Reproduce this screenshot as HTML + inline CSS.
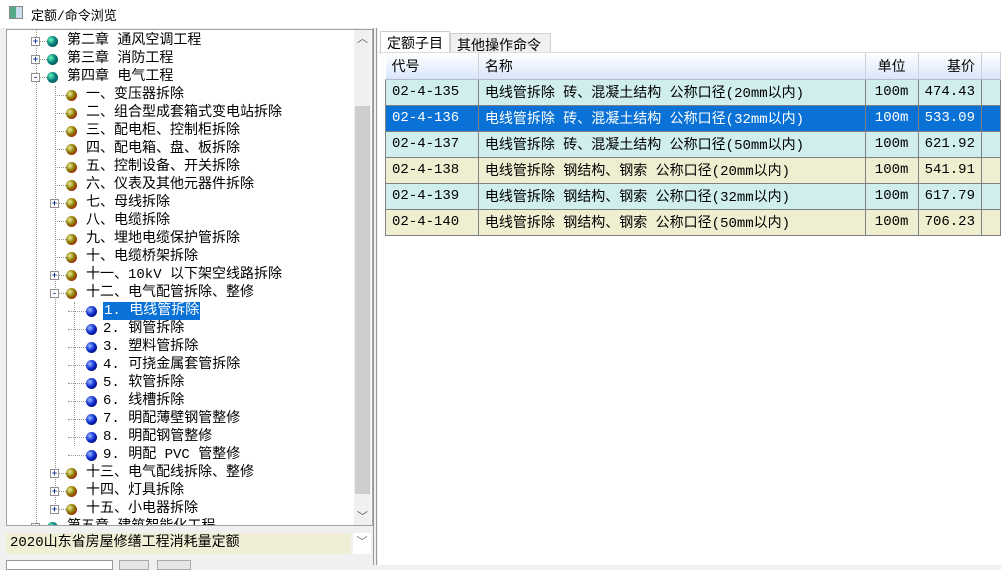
<!DOCTYPE html>
<html><head><meta charset="utf-8"><style>
*{margin:0;padding:0;box-sizing:border-box}
body{width:1001px;height:565px;background:#f0f0f0;font-family:"Liberation Mono","Noto Sans CJK SC","WenQuanYi Zen Hei",monospace;font-size:14px;position:relative;overflow:hidden;color:#000}
.abs{position:absolute}
#title{left:0;top:0;width:1001px;height:28px;background:#fff}
#tree{left:6px;top:29px;width:367px;height:497px;background:#fff;border:1px solid #a0a0a0;overflow:hidden}
.r{position:absolute;height:18px;line-height:18px;white-space:nowrap;font-size:14px}
.pm{position:absolute;width:9px;height:9px;border:1px solid #919191;background:#fff;font-size:9px;line-height:7px;text-align:center;color:#1a3f9a;font-weight:bold;font-family:"Liberation Sans",sans-serif}
.ball{position:absolute;width:11px;height:11px;border-radius:50%}
.b1{background:radial-gradient(circle at 35% 35%,#6fb,#0a8080 45%,#044 90%)}
.b2{background:radial-gradient(circle at 35% 35%,#ee9,#8a7a00 45%,#a01 90%)}
.b3{background:radial-gradient(circle at 35% 35%,#9bf,#1030d0 45%,#000060 90%)}
.dh{position:absolute;height:0;border-top:1px dotted #999}
.dv{position:absolute;width:0;border-left:1px dotted #999}
table{border-collapse:collapse;position:absolute;left:385px;top:53px;font-size:14px;table-layout:fixed}
td{height:26px;border:1px solid #808080;padding:0 6px;white-space:nowrap;overflow:hidden}
th{height:26px;font-weight:normal;text-align:left;padding:0 6px;background:linear-gradient(#fff,#d8e6fb);border-right:1px solid #c8d0dc;border-bottom:1px solid #b0bccc}
.c{background:#cfeeed}.y{background:#f0eed0}.s{background:#0a72d6;color:#fff}
</style></head><body>
<div id="title" class="abs">
 <div class="abs" style="left:9px;top:6px;width:14px;height:13px;border:1px solid #888;background:linear-gradient(90deg,#5a8 0 50%,#cde 50%)"></div>
 <div class="abs" style="left:31px;top:5px;font-size:13px">定额/命令浏览</div>
</div>
<div id="tree" class="abs">
 <div class="dv" style="left:29px;top:0;height:497px"></div>
 <div class="dv" style="left:48px;top:56px;height:420px"></div>
 <div class="dv" style="left:67px;top:272px;height:144px"></div>
</div>
<div id="items"></div>
<div class="abs" style="left:354px;top:30px;width:17px;height:495px;background:#f0f0f0"></div>
<div class="abs" style="left:355px;top:106px;width:15px;height:388px;background:#cdcdcd"></div>
<div class="abs" style="left:357px;top:30px;font-size:11px;color:#606060">︿</div>
<div class="abs" style="left:357px;top:508px;font-size:11px;color:#606060">﹀</div>
<div class="abs" style="left:6px;top:533px;width:345px;height:21px;background:#f0efd5;font-size:14px;line-height:21px;padding-left:4px">2020山东省房屋修缮工程消耗量定额</div>
<div class="abs" style="left:353px;top:533px;width:18px;height:21px;background:#fff;color:#707070;font-size:11px;text-align:center;line-height:21px">﹀</div>
<div class="abs" style="left:6px;top:560px;width:107px;height:10px;background:#fff;border:1px solid #999"></div>
<div class="abs" style="left:119px;top:560px;width:30px;height:10px;background:#e6e6e6;border:1px solid #aaa"></div>
<div class="abs" style="left:157px;top:560px;width:34px;height:10px;background:#e6e6e6;border:1px solid #aaa"></div>
<div class="abs" style="left:373px;top:28px;width:4px;height:537px;border-left:1px solid #999;border-right:1px solid #999;background:#f0f0f0"></div>
<div class="abs" style="left:378px;top:28px;width:623px;height:537px;background:#fff"></div>
<div class="abs" style="left:380px;top:31px;width:70px;height:23px;background:#fff;border:1px solid #ccc;border-bottom:none;padding:1px 0 0 6px">定额子目</div>
<div class="abs" style="left:450px;top:33px;width:101px;height:20px;background:#f0f0f0;border:1px solid #d0d0d0;padding:1px 0 0 6px">其他操作命令</div>
<div class="abs" style="left:378px;top:52px;width:623px;height:1px;background:#ddd"></div>
<table>
<colgroup><col style="width:95px"><col style="width:396px"><col style="width:54px"><col style="width:63px"><col style="width:20px"></colgroup>
<tr><th>代号</th><th>名称</th><th style="text-align:center">单位</th><th style="text-align:right">基价</th><th></th></tr>
<tr class="c"><td>02-4-135</td><td>电线管拆除 砖、混凝土结构 公称口径(20mm以内)</td><td style="text-align:center">100m</td><td style="text-align:right">474.43</td><td></td></tr>
<tr class="s"><td>02-4-136</td><td>电线管拆除 砖、混凝土结构 公称口径(32mm以内)</td><td style="text-align:center">100m</td><td style="text-align:right">533.09</td><td></td></tr>
<tr class="c"><td>02-4-137</td><td>电线管拆除 砖、混凝土结构 公称口径(50mm以内)</td><td style="text-align:center">100m</td><td style="text-align:right">621.92</td><td></td></tr>
<tr class="y"><td>02-4-138</td><td>电线管拆除 钢结构、钢索 公称口径(20mm以内)</td><td style="text-align:center">100m</td><td style="text-align:right">541.91</td><td></td></tr>
<tr class="c"><td>02-4-139</td><td>电线管拆除 钢结构、钢索 公称口径(32mm以内)</td><td style="text-align:center">100m</td><td style="text-align:right">617.79</td><td></td></tr>
<tr class="y"><td>02-4-140</td><td>电线管拆除 钢结构、钢索 公称口径(50mm以内)</td><td style="text-align:center">100m</td><td style="text-align:right">706.23</td><td></td></tr>
</table>
<script>
var it=[[1,'+','第二章 通风空调工程'],[1,'+','第三章 消防工程'],[1,'-','第四章 电气工程'],
[2,'','一、变压器拆除'],[2,'','二、组合型成套箱式变电站拆除'],[2,'','三、配电柜、控制柜拆除'],[2,'','四、配电箱、盘、板拆除'],[2,'','五、控制设备、开关拆除'],[2,'','六、仪表及其他元器件拆除'],[2,'+','七、母线拆除'],[2,'','八、电缆拆除'],[2,'','九、埋地电缆保护管拆除'],[2,'','十、电缆桥架拆除'],[2,'+','十一、10kV 以下架空线路拆除'],[2,'-','十二、电气配管拆除、整修'],
[3,'','1. 电线管拆除'],[3,'','2. 钢管拆除'],[3,'','3. 塑料管拆除'],[3,'','4. 可挠金属套管拆除'],[3,'','5. 软管拆除'],[3,'','6. 线槽拆除'],[3,'','7. 明配薄壁钢管整修'],[3,'','8. 明配钢管整修'],[3,'','9. 明配 PVC 管整修'],
[2,'+','十三、电气配线拆除、整修'],[2,'+','十四、灯具拆除'],[2,'+','十五、小电器拆除'],[1,'+','第五章 建筑智能化工程']];
var h='';
it.forEach(function(a,i){
 var y=32+18*i, lv=a[0];
 var px=[0,25,44,0][lv], bx=[0,41,60,80][lv], tx=[0,61,80,97][lv];
 var cy=y+9;
 var lx=lv==3?62:px+5;
 h+='<div class="dh" style="left:'+lx+'px;top:'+cy+'px;width:'+(bx-lx)+'px"></div>';
 if(a[1])h+='<div class="pm" style="left:'+px+'px;top:'+(cy-4)+'px">'+a[1]+'</div>';
 h+='<div class="ball b'+lv+'" style="left:'+bx+'px;top:'+(cy-5)+'px"></div>';
 var sel=(i==15)?'background:#0a72d6;color:#fff;padding:0 1px;':'';
 h+='<div class="r" style="left:'+tx+'px;top:'+y+'px;'+sel+'">'+a[2]+'</div>';
});
var d=document.getElementById('items');d.style.cssText='position:absolute;left:6px;top:0;width:348px;height:525px;overflow:hidden';
d.innerHTML=h;
</script>
</body></html>
